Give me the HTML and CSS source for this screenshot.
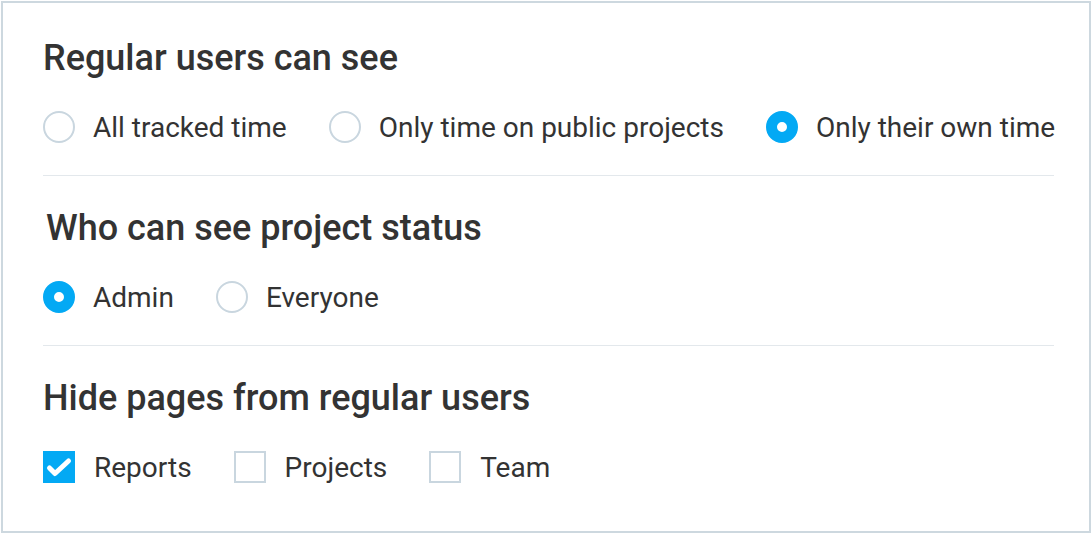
FILE: index.html
```html
<!DOCTYPE html>
<html lang="en">
<head>
    <meta charset="UTF-8">
    <title>Permissions</title>
    <link rel="stylesheet" href="styles.css">
</head>
<body>
    <div class="card">
        <div class="section">
            <h2>Regular users can see</h2>
            <div class="options">
                <label class="option"><span class="radio"></span>All tracked time</label>
                <label class="option"><span class="radio"></span>Only time on public projects</label>
                <label class="option"><span class="radio checked"></span>Only their own time</label>
            </div>
        </div>

        <div class="section">
            <h2 class="nudge">Who can see project status</h2>
            <div class="options">
                <label class="option"><span class="radio checked"></span>Admin</label>
                <label class="option"><span class="radio"></span>Everyone</label>
            </div>
        </div>

        <div class="section last">
            <h2>Hide pages from regular users</h2>
            <div class="options">
                <label class="option box">
                    <span class="checkbox checked">
                        <svg width="32" height="32" viewBox="0 0 32 32"><path d="M6.5 17l5.5 5.5L25.5 10" fill="none" stroke="#fff" stroke-width="5" stroke-linecap="round" stroke-linejoin="round"/></svg>
                    </span>Reports
                </label>
                <label class="option box"><span class="checkbox"></span>Projects</label>
                <label class="option box"><span class="checkbox"></span>Team</label>
            </div>
        </div>
    </div>
</body>
</html>
```

FILE: styles.css
```css
* {
    margin: 0;
    padding: 0;
    box-sizing: border-box;
}

body {
    font-family: Roboto, "Liberation Sans", sans-serif;
    background: #fff;
    color: #333;
}

.card {
    width: 1090px;
    height: 532px;
    margin: 1px;
    border: 2px solid #cdd8df;
    padding: 3px 35px 0 40px;
}

.section {
    padding: 34px 0 32px;
    border-bottom: 1px solid #e3e8ec;
}

.section.last {
    border-bottom: none;
}

h2 {
    font-size: 36px;
    font-weight: 500;
    line-height: 36px;
    color: #333;
    margin-bottom: 35px;
}

h2.nudge {
    padding-left: 3px;
}

.options {
    display: flex;
    gap: 42px;
}

.option {
    display: flex;
    align-items: center;
    gap: 18px;
    height: 32px;
    font-size: 28px;
    color: #333;
    white-space: nowrap;
}

.option.box {
    gap: 19px;
}

.radio {
    width: 32px;
    height: 32px;
    border-radius: 50%;
    border: 2px solid #c9d6df;
    flex-shrink: 0;
}

.radio.checked {
    border: 11px solid #03a9f4;
}

.checkbox {
    width: 32px;
    height: 32px;
    border: 2px solid #c9d6df;
    flex-shrink: 0;
    display: flex;
}

.checkbox.checked {
    border: none;
    background: #03a9f4;
}
```
